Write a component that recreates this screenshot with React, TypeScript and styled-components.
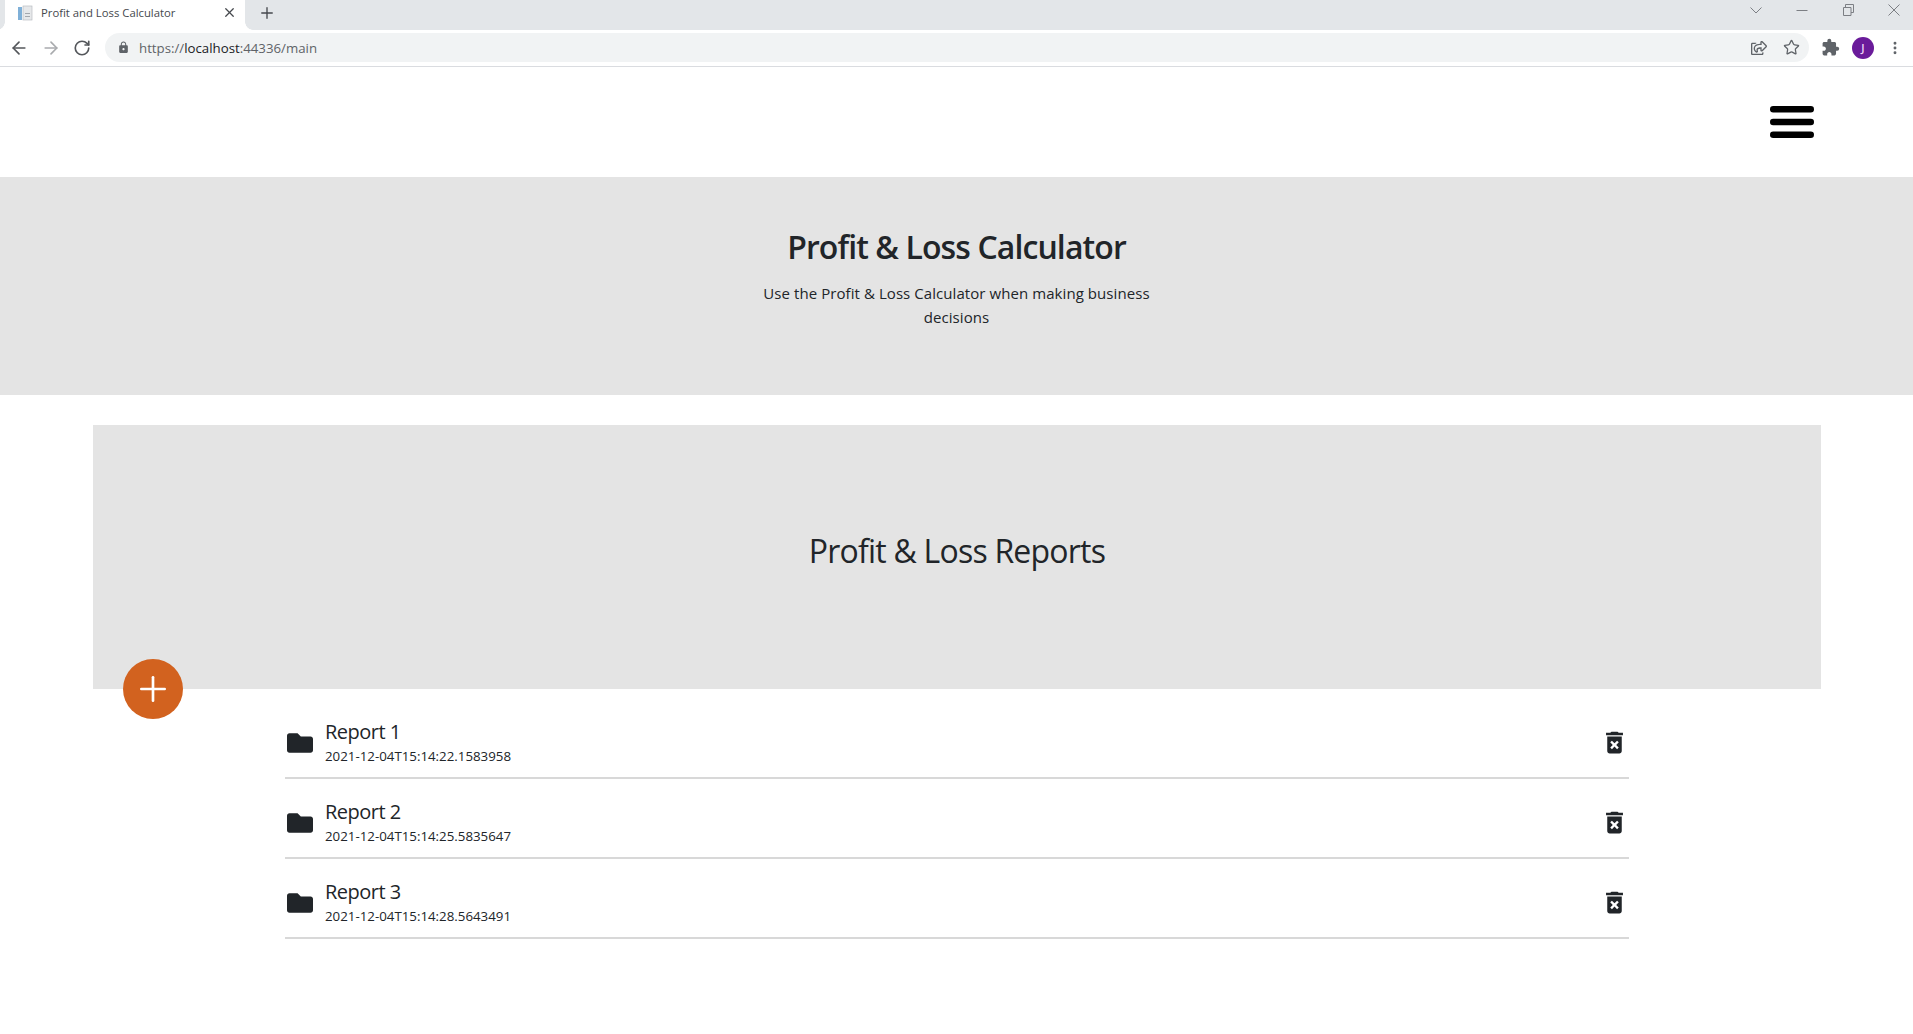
import React from "react";
import styled, { createGlobalStyle } from "styled-components";
import { FaFolder, FaRegShareSquare } from "react-icons/fa";
import { MdDeleteForever, MdExtension, MdLock } from "react-icons/md";
import { ArrowLeft, ArrowRight, MoreVertical, Plus, RotateCw, Star, X } from "lucide-react";

const GlobalStyle = createGlobalStyle`
  html, body {
    margin: 0;
    padding: 0;
    background: #fff;
    color: #212529;
    font-family: "Open Sans", "Noto Sans", sans-serif;
  }
  * { box-sizing: border-box; }
`;

const Page = styled.div`
  width: 1913px;
  height: 1034px;
  overflow: hidden;
`;

/* browser chrome */
const TabStrip = styled.div`
  height: 30px;
  background: #e3e6e9;
  display: flex;
  padding-left: 5px;
`;

const Tab = styled.div`
  position: relative;
  width: 240px;
  height: 30px;
  background: #fff;
  display: flex;
  align-items: center;
  padding: 0 8px 5px 12px;
  gap: 8px;
  font-size: 11.3px;
  color: #45484d;

  &::before,
  &::after {
    content: "";
    position: absolute;
    bottom: 0;
    width: 8px;
    height: 8px;
  }

  &::before {
    left: -8px;
    background: radial-gradient(circle at 0 0, #e3e6e9 7.5px, #fff 8px);
  }

  &::after {
    right: -8px;
    background: radial-gradient(circle at 100% 0, #e3e6e9 7.5px, #fff 8px);
  }
`;

const TabTitle = styled.span`
  flex: 1;
`;

const NewTab = styled.div`
  margin-left: 13px;
  padding-bottom: 5px;
  display: flex;
  align-items: center;
  color: #45484d;
`;

const WindowButtons = styled.div`
  margin-left: auto;
  height: 20px;
  padding-right: 11px;
  display: flex;
  align-items: center;
  gap: 30px;
`;

const WindowGlyph = styled.svg`
  width: 16px;
  height: 16px;
  fill: none;
  stroke: #7c7f84;
  stroke-width: 1;
`;

const Toolbar = styled.div`
  height: 37px;
  background: #fff;
  border-bottom: 1px solid #dadce0;
  display: flex;
  align-items: center;
  padding: 0 0 1px 9px;
`;

const NavButton = styled.div<{ $dim?: boolean }>`
  width: 32px;
  display: flex;
  align-items: center;
  color: ${(p) => (p.$dim ? "#a9abae" : "#54575b")};
`;

const AddressBar = styled.div`
  width: 1704px;
  height: 29px;
  border-radius: 15px;
  background: #f1f3f4;
  display: flex;
  align-items: center;
  padding: 0 9px 0 12px;
  font-size: 13.25px;
  color: #5f6368;
`;

const UrlHost = styled.span`
  color: #202124;
`;

const Url = styled.div`
  margin-left: 9px;
  flex: 1;
`;

const AddressIcons = styled.div`
  display: flex;
  align-items: center;
  gap: 16px;
  color: #5f6368;
`;

const Extensions = styled.div`
  display: flex;
  align-items: center;
  margin-left: 12px;
  color: #5f6368;
`;

const Avatar = styled.div`
  width: 22px;
  height: 22px;
  margin: 0 13px 0 12px;
  border-radius: 50%;
  background: #6a1b9a;
  color: #f1d9f7;
  font-size: 11px;
  font-weight: 600;
  display: flex;
  align-items: center;
  justify-content: center;
`;

/* app */
const NavBar = styled.nav`
  height: 110px;
  display: flex;
  align-items: center;
  justify-content: flex-end;
  padding-right: 99px;
`;

const MenuIcon = styled.svg`
  width: 44px;
  height: 32px;
  fill: #000;
`;

const Hero = styled.header`
  height: 218px;
  background: #e4e4e4;
  padding-top: 51px;
  text-align: center;
`;

const HeroTitle = styled.h1`
  margin: 0 0 15px;
  font-size: 32px;
  line-height: 38px;
  font-weight: 600;
  letter-spacing: -0.9px;
`;

const HeroLead = styled.p`
  margin: 0 auto;
  width: 400px;
  font-size: 15px;
  line-height: 24px;
  letter-spacing: 0.07px;
`;

const Main = styled.main`
  padding: 30px 92px 0 93px;
`;

const ReportsPanel = styled.section`
  position: relative;
  height: 264px;
  background: #e4e4e4;
  padding-top: 106px;
  text-align: center;
`;

const ReportsTitle = styled.h2`
  margin: 0;
  font-size: 32px;
  line-height: 40px;
  font-weight: 400;
  letter-spacing: -0.78px;
`;

const AddButton = styled.button`
  position: absolute;
  left: 30px;
  bottom: -30px;
  width: 60px;
  height: 60px;
  border: 0;
  padding: 0;
  border-radius: 50%;
  background: #d2621f;
  color: #fff;
  display: flex;
  align-items: center;
  justify-content: center;
`;

const ReportList = styled.ul`
  list-style: none;
  margin: 10px 192px 0;
  padding: 0;
`;

const ReportRow = styled.li`
  height: 80px;
  border-bottom: 2px solid #d8d8d8;
  display: flex;
  align-items: center;
  padding: 9px 0 0 2px;
`;

const FolderIcon = styled(FaFolder)`
  width: 26px;
  height: 26px;
  color: #212529;
  margin-right: 12px;
`;

const ReportText = styled.div`
  flex: 1;
`;

const ReportName = styled.div`
  font-size: 20px;
  line-height: 27px;
  letter-spacing: -0.5px;
`;

const ReportDate = styled.div`
  font-size: 13.3px;
  line-height: 23px;
`;

const DeleteIcon = styled(MdDeleteForever)`
  width: 29px;
  height: 29px;
  color: #212529;
`;

const reports = [
  { name: "Report 1", date: "2021-12-04T15:14:22.1583958" },
  { name: "Report 2", date: "2021-12-04T15:14:25.5835647" },
  { name: "Report 3", date: "2021-12-04T15:14:28.5643491" },
];

export default function App() {
  return (
    <Page>
      <GlobalStyle />
      <TabStrip>
        <Tab>
          <svg width="16" height="16" viewBox="0 0 16 16">
            <rect x="1" y="2" width="4" height="13" fill="#7fb0d8" />
            <rect x="6" y="1" width="9" height="14" fill="#e6e8ea" stroke="#b9bdc2" strokeWidth="0.7" />
            <rect x="8" y="8" width="5" height="1" fill="#a4a8ad" />
            <rect x="8" y="11" width="5" height="1" fill="#a4a8ad" />
          </svg>
          <TabTitle>Profit and Loss Calculator</TabTitle>
          <X size={15} strokeWidth={2} />
        </Tab>
        <NewTab>
          <Plus size={18} strokeWidth={1.8} />
        </NewTab>
        <WindowButtons>
          <WindowGlyph viewBox="0 0 16 16">
            <path d="M2.5 5.5 8 11l5.500-5.500" />
          </WindowGlyph>
          <WindowGlyph viewBox="0 0 16 16">
            <path d="M2.500 8.500h11" />
          </WindowGlyph>
          <WindowGlyph viewBox="0 0 16 16">
            <path d="M3.500 5.500h7.500v8h-7.500zM5.500 5.500v-3h8v8h-2.500" />
          </WindowGlyph>
          <WindowGlyph viewBox="0 0 16 16">
            <path d="M2.500 2.500l11 11M13.500 2.500l-11 11" />
          </WindowGlyph>
        </WindowButtons>
      </TabStrip>
      <Toolbar>
        <NavButton>
          <ArrowLeft size={20} strokeWidth={2} />
        </NavButton>
        <NavButton $dim>
          <ArrowRight size={20} strokeWidth={2} />
        </NavButton>
        <NavButton>
          <RotateCw size={18} strokeWidth={2.2} />
        </NavButton>
        <AddressBar>
          <MdLock size={13} />
          <Url>
            https://<UrlHost>localhost</UrlHost>:44336/main
          </Url>
          <AddressIcons>
            <FaRegShareSquare size={16} />
            <Star size={17} strokeWidth={1.8} />
          </AddressIcons>
        </AddressBar>
        <Extensions>
          <MdExtension size={19} />
          <Avatar>J</Avatar>
          <MoreVertical size={16} strokeWidth={2.4} />
        </Extensions>
      </Toolbar>

      <NavBar>
        <MenuIcon viewBox="0 0 44 32">
          <rect x="0" y="0" width="44" height="6.500" rx="3.200" />
          <rect x="0" y="12.750" width="44" height="6.500" rx="3.200" />
          <rect x="0" y="25.500" width="44" height="6.500" rx="3.200" />
        </MenuIcon>
      </NavBar>

      <Hero>
        <HeroTitle>Profit &amp; Loss Calculator</HeroTitle>
        <HeroLead>Use the Profit &amp; Loss Calculator when making business decisions</HeroLead>
      </Hero>

      <Main>
        <ReportsPanel>
          <ReportsTitle>Profit &amp; Loss Reports</ReportsTitle>
          <AddButton aria-label="Add report">
            <Plus size={40} strokeWidth={1.6} />
          </AddButton>
        </ReportsPanel>
        <ReportList>
          {reports.map((report) => (
            <ReportRow key={report.name}>
              <FolderIcon />
              <ReportText>
                <ReportName>{report.name}</ReportName>
                <ReportDate>{report.date}</ReportDate>
              </ReportText>
              <DeleteIcon />
            </ReportRow>
          ))}
        </ReportList>
      </Main>
    </Page>
  );
}
